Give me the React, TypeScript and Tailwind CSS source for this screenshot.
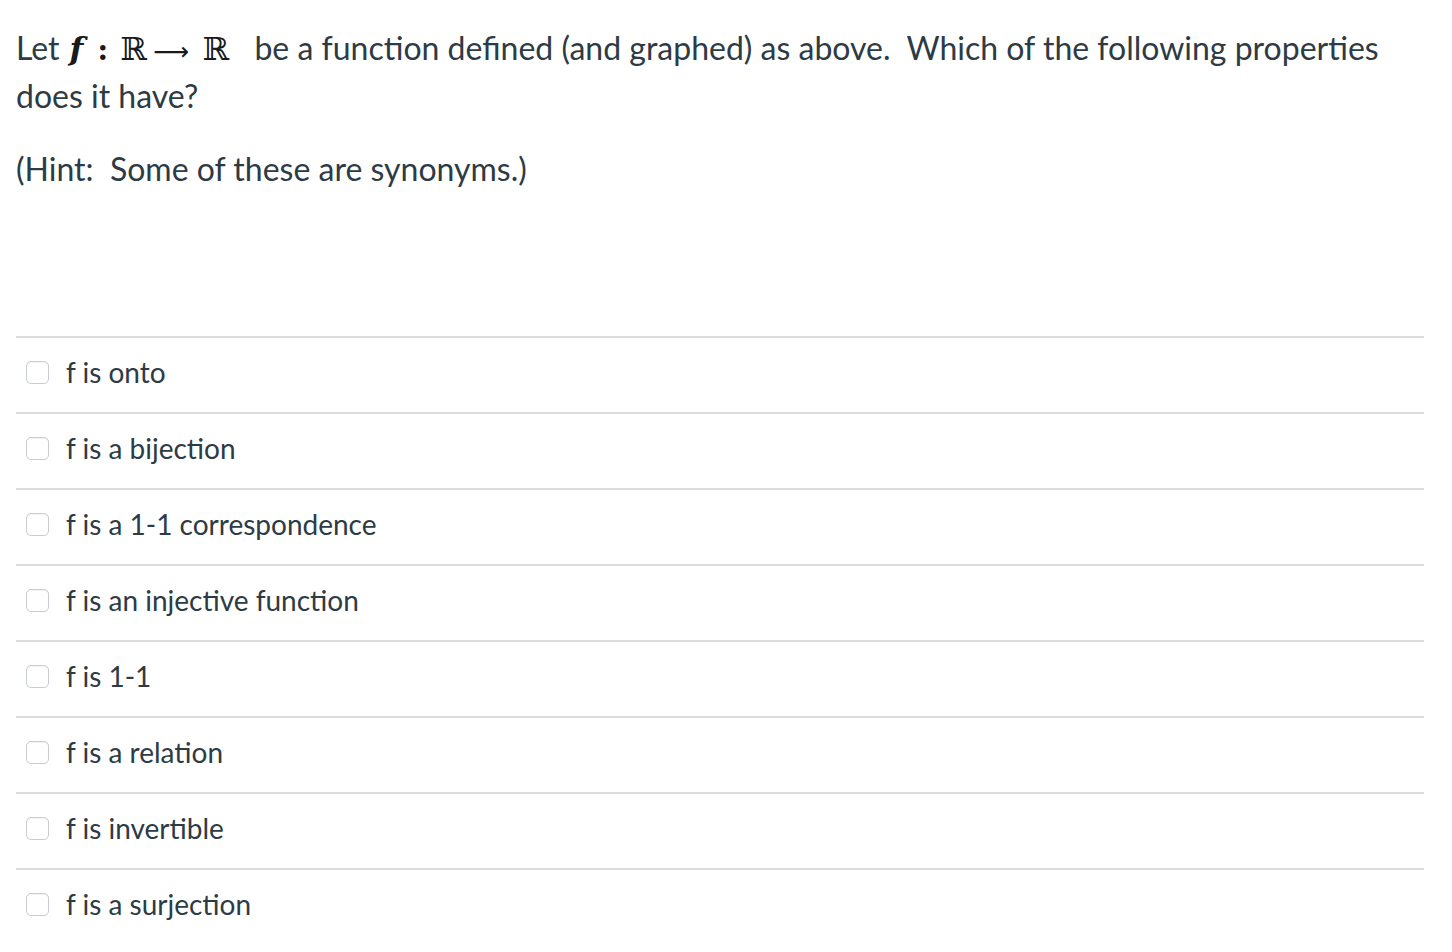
import React from 'react';

const options = [
  'f is onto',
  'f is a bijection',
  'f is a 1-1 correspondence',
  'f is an injective function',
  'f is 1-1',
  'f is a relation',
  'f is invertible',
  'f is a surjection',
];

export default function App() {
  return (
    <div className="min-h-screen bg-white text-[#2d3b45] font-['Lato',sans-serif]">
      <div className="px-4 pt-[24px] w-[1440px]">
        <p className="text-[32px] leading-[48px]">
          Let
          <span className="font-['DejaVu_Serif',serif] text-[#1a1a1a] leading-[0]">
            <i className="ml-[10px] text-[32px] font-semibold leading-[0]">f</i>
            <span className="ml-[14px] text-[30px] font-bold leading-[0]">:</span>
            <span className="ml-[12px] text-[32px] leading-[0]">ℝ</span>
            <span className="ml-[6px] text-[25px] font-['DejaVu_Sans',sans-serif] leading-[0]">⟶</span>
            <span className="ml-[14px] text-[32px] leading-[0]">ℝ</span>
          </span>
          <span className="ml-[25px]">be a function defined (and graphed) as above.&nbsp; Which of the following properties does it have?</span>
        </p>
        <p className="mt-[25px] text-[32px] leading-[48px]">(Hint:&nbsp; Some of these are synonyms.)</p>

        <div className="mt-[143px]">
          {options.map((opt) => (
            <label key={opt} className="flex items-center h-[76px] border-t-2 border-[#dddddd] pl-[10px] pb-[6px]">
              <span className="w-[23px] h-[23px] rounded-[5px] border border-[#c7cdd1] bg-white shadow-[inset_0_1px_1px_rgba(0,0,0,0.05)]" />
              <span className="ml-[17px] text-[28px]">{opt}</span>
            </label>
          ))}
        </div>
      </div>
    </div>
  );
}
